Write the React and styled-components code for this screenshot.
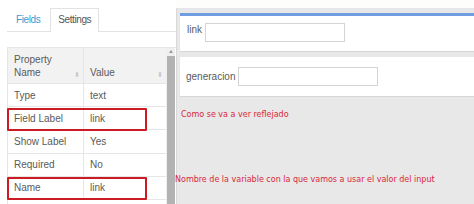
import React from "react";
import styled, { createGlobalStyle } from "styled-components";

const Global = createGlobalStyle`
  html, body {
    margin: 0;
    padding: 0;
    background: #fdfdfb;
  }
  body {
    font-family: "Liberation Sans", Arial, sans-serif;
  }
`;

const Page = styled.div`
  position: relative;
  width: 474px;
  height: 204px;
  display: flex;
  overflow: hidden;
`;

const Left = styled.div`
  width: 169px;
  padding-left: 7px;
  background: #fff;
  display: flex;
  flex-direction: column;
`;

const Tabs = styled.div`
  display: flex;
  padding-top: 8px;
  height: 23px;
  border-bottom: 1px solid #e2e2e2;
`;

const Tab = styled.div`
  box-sizing: border-box;
  height: 24px;
  padding: ${(p) => (p.active ? "0 7px" : "0 9px 0 8px")};
  font-size: 10px;
  letter-spacing: -0.4px;
  line-height: 22px;
  color: ${(p) => (p.active ? "#555" : "#3b9bd1")};
  background: ${(p) => (p.active ? "#fff" : "transparent")};
  border: 1px solid ${(p) => (p.active ? "#e2e2e2" : "transparent")};
  border-bottom: none;
`;

const TableWrap = styled.div`
  margin-top: 15px;
  display: flex;
  flex: 1;
  border-top: 1px solid #e6e6e6;
  border-left: 1px solid #e6e6e6;
`;

const Table = styled.div`
  width: 158px;
  display: flex;
  flex-direction: column;
`;

const Row = styled.div`
  box-sizing: border-box;
  display: grid;
  grid-template-columns: 75px 1fr;
  height: ${(p) => (p.head ? "36px" : "23.2px")};
  flex-shrink: 0;
  background: ${(p) => (p.head ? "#f2f2f2" : "#fff")};
  border-bottom: 1px solid #e6e6e6;
  font-size: 10px;
  color: #5a5a5a;
`;

const Cell = styled.div`
  position: relative;
  display: flex;
  align-items: ${(p) => (p.head ? "flex-end" : "center")};
  padding: ${(p) => (p.head ? "0 6px 4px 6px" : "0 6px")};
  line-height: 13px;
  border-left: ${(p) => (p.second ? "1px solid #e6e6e6" : "none")};
`;

const Sort = styled.span`
  position: absolute;
  right: 3px;
  bottom: 5px;
  font-size: 7px;
  color: #c8c8c8;
  line-height: 7px;
`;

const Scroll = styled.div`
  width: 9px;
  background: #efefef;
  display: flex;
  flex-direction: column;
  align-items: center;
`;

const Arrow = styled.div`
  margin-top: 2px;
  width: 0;
  height: 0;
  border-left: 2px solid transparent;
  border-right: 2px solid transparent;
  border-bottom: 3px solid #999;
`;

const Thumb = styled.div`
  margin-top: 3px;
  width: 8px;
  flex: 1;
  background: #b2b2b2;
`;

const Right = styled.div`
  flex: 1;
  margin-top: 8px;
  border-left: 1px solid #d8d8d8;
  border-top: 1px solid #e4e4ec;
  background: #e8e8e8;
  padding: 4px 0 0 3px;
  display: flex;
  flex-direction: column;
`;

const BlueBar = styled.div`
  height: 3px;
  background: #6f9de0;
`;

const Card = styled.div`
  display: flex;
  align-items: ${(p) => (p.top ? "flex-start" : "center")};
  gap: 3px;
  height: ${(p) => p.h}px;
  box-sizing: border-box;
  padding: ${(p) => (p.top ? "7px 0 0 7px" : "0 0 0 6px")};
  background: #fff;
  margin-bottom: ${(p) => p.mb || 0}px;
  border-bottom: 1px solid #d6d6d6;
  font-size: 10px;
  color: #5a5a5a;
`;

const Label = styled.span`
  line-height: 14px;
`;

const Input = styled.div`
  width: 140px;
  height: 19px;
  box-sizing: border-box;
  border: 1px solid #d4d4d4;
  background: #fff;
`;

const Note = styled.div`
  position: absolute;
  left: ${(p) => p.x}px;
  top: ${(p) => p.y}px;
  font-family: "DejaVu Sans", Verdana, sans-serif;
  font-size: 8px;
  color: #d9273a;
  white-space: nowrap;
`;

const Mark = styled.div`
  position: absolute;
  left: 7px;
  top: ${(p) => p.y}px;
  width: 140px;
  height: 23px;
  box-sizing: border-box;
  border: 2px solid #cc1b22;
  border-radius: 1px;
`;

const rows = [
  ["Type", "text"],
  ["Field Label", "link"],
  ["Show Label", "Yes"],
  ["Required", "No"],
  ["Name", "link"],
];

export default function App() {
  return (
    <Page>
      <Global />
      <Left>
        <Tabs>
          <Tab>Fields</Tab>
          <Tab active>Settings</Tab>
        </Tabs>
        <TableWrap>
          <Table>
            <Row head>
              <Cell head>
                Property
                <br />
                Name
                <Sort>⬍</Sort>
              </Cell>
              <Cell head second>
                Value
                <Sort>⬍</Sort>
              </Cell>
            </Row>
            {rows.map(([k, v]) => (
              <Row key={k}>
                <Cell>{k}</Cell>
                <Cell second>{v}</Cell>
              </Row>
            ))}
          </Table>
          <Scroll>
            <Arrow />
            <Thumb />
          </Scroll>
        </TableWrap>
      </Left>
      <Right>
        <BlueBar />
        <Card top h={36} mb={5}>
          <Label>link</Label>
          <Input />
        </Card>
        <Card h={40}>
          <Label>generacion</Label>
          <Input />
        </Card>
      </Right>
      <Mark y={108} />
      <Mark y={177} />
      <Note x={181} y={110}>Como se va a ver reflejado</Note>
      <Note x={175} y={175}>
        Nombre de la variable con la que vamos a usar el valor del input
      </Note>
    </Page>
  );
}
